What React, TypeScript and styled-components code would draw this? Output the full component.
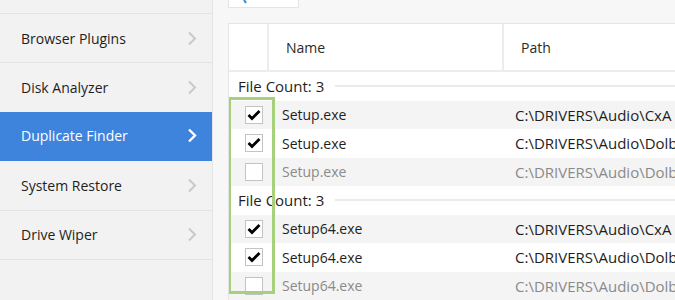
import React from "react";
import styled, { createGlobalStyle } from "styled-components";

const COLORS = {
  side: "#f2f2f2",
  main: "#f7f7f7",
  line: "#e4e4e4",
  blue: "#3f84dc",
  text: "#1e1e1e",
  muted: "#8a8a8a",
  stripe: "#f4f4f4",
  green: "#a7d07c",
};

const GlobalStyle = createGlobalStyle`
  html, body {
    margin: 0;
    padding: 0;
    overflow: hidden;
    background: ${COLORS.main};
  }
  body {
    font-family: "Open Sans", "Noto Sans", sans-serif;
    color: ${COLORS.text};
  }
  * { box-sizing: border-box; }
`;

const Root = styled.div`
  display: flex;
  width: 675px;
  height: 300px;
  overflow: hidden;
`;

const Sidebar = styled.nav`
  width: 213px;
  flex-shrink: 0;
  background: ${COLORS.side};
  border-right: 1px solid ${COLORS.line};
`;

const SideStub = styled.div`
  height: 14px;
  border-bottom: 1px solid ${COLORS.line};
`;

const NavItem = styled.div<{ $active?: boolean }>`
  display: flex;
  align-items: center;
  justify-content: space-between;
  height: 49.4px;
  padding: 0 15px 0 21px;
  font-size: 14px;
  border-bottom: 1px solid ${(p) => (p.$active ? COLORS.blue : COLORS.line)};
  background: ${(p) => (p.$active ? COLORS.blue : "transparent")};
  color: ${(p) => (p.$active ? "#ffffff" : COLORS.text)};
  margin-top: ${(p) => (p.$active ? "-1px" : "0")};
`;

const Chevron = ({ active }: { active?: boolean }) => (
  <svg width="10" height="15" viewBox="0 0 10 15">
    <path
      d="M2 1.5 L8 7.5 L2 13.5"
      fill="none"
      stroke={active ? "#ffffff" : "#c9c9c9"}
      strokeWidth={active ? 2.4 : 2}
    />
  </svg>
);

const Main = styled.main`
  flex: 1;
  min-width: 0;
  display: flex;
  flex-direction: column;
  padding-left: 15px;
  background: ${COLORS.main};
`;

const Toolbar = styled.div`
  height: 23px;
  flex-shrink: 0;
  display: flex;
  align-items: flex-start;
`;

const SearchBox = styled.div`
  position: relative;
  width: 71px;
  height: 8px;
  background: #ffffff;
  border: 1px solid ${COLORS.line};
  border-top: none;
`;

const SearchIcon = styled.svg`
  position: absolute;
  left: 14px;
  top: 0;
`;

const Table = styled.div`
  position: relative;
  flex: 1;
  background: #ffffff;
  border-top: 1px solid ${COLORS.line};
  border-left: 1px solid ${COLORS.line};
  overflow: hidden;
`;

const Grid = styled.div`
  display: grid;
  grid-template-columns: 38px 235px 1fr;
  white-space: nowrap;
`;

const HeaderRow = styled(Grid)`
  height: 48px;
  border-bottom: 2px solid #ececec;
`;

const HeaderCell = styled.div<{ $divider?: boolean }>`
  display: flex;
  align-items: center;
  padding-left: 17px;
  font-size: 14px;
  color: #2a2a2a;
  border-left: ${(p) => (p.$divider ? `2px solid #ececec` : "none")};
`;

const GroupRow = styled.div`
  display: flex;
  align-items: center;
  height: 28.5px;
  padding-left: 9px;
  font-size: 15px;
  color: ${COLORS.text};
`;

const GroupLine = styled.div`
  flex: 1;
  height: 2px;
  margin-left: 11px;
  background: #ebebeb;
`;

const DataRow = styled(Grid)<{ $stripe?: boolean; $muted?: boolean }>`
  height: 28.5px;
  align-items: center;
  font-size: 14px;
  background: ${(p) => (p.$stripe ? COLORS.stripe : "#ffffff")};
  color: ${(p) => (p.$muted ? COLORS.muted : COLORS.text)};
`;

const CheckCell = styled.div`
  display: flex;
  align-items: center;
  padding-left: 16px;
`;

const Box = styled.div`
  width: 18px;
  height: 18px;
  border: 1px solid #c3c3c3;
  background: #ffffff;
  display: flex;
  align-items: center;
  justify-content: center;
`;

const NameCell = styled.div`
  padding-left: 15px;
`;

const PathCell = styled.div`
  padding-left: 13px;
  font-size: 15px;
  overflow: hidden;
`;

const Highlight = styled.div`
  position: absolute;
  left: -1px;
  top: 73px;
  width: 47px;
  height: 197px;
  border: 3px solid ${COLORS.green};
  pointer-events: none;
`;

const CheckBox = ({ checked }: { checked: boolean }) => (
  <Box>
    {checked && (
      <svg width="14" height="12" viewBox="0 0 14 12">
        <path d="M1.5 6 L5 9.5 L12.5 2" fill="none" stroke="#000" strokeWidth="2.8" />
      </svg>
    )}
  </Box>
);

const navItems = [
  "Browser Plugins",
  "Disk Analyzer",
  "Duplicate Finder",
  "System Restore",
  "Drive Wiper",
];

const groups = [
  {
    name: "Setup.exe",
    paths: ["C:\\DRIVERS\\Audio\\CxA", "C:\\DRIVERS\\Audio\\Dolb", "C:\\DRIVERS\\Audio\\Dolb"],
  },
  {
    name: "Setup64.exe",
    paths: ["C:\\DRIVERS\\Audio\\CxA", "C:\\DRIVERS\\Audio\\Dolb", "C:\\DRIVERS\\Audio\\Dolb"],
  },
];

export default function App() {
  return (
    <Root>
      <GlobalStyle />
      <Sidebar>
        <SideStub />
        {navItems.map((label) => {
          const active = label === "Duplicate Finder";
          return (
            <NavItem key={label} $active={active}>
              {label}
              <Chevron active={active} />
            </NavItem>
          );
        })}
      </Sidebar>
      <Main>
        <Toolbar>
          <SearchBox>
            <SearchIcon width="6" height="4" viewBox="0 0 6 4">
              <path d="M1 0 L3 3" stroke={COLORS.blue} strokeWidth="2" />
            </SearchIcon>
          </SearchBox>
        </Toolbar>
        <Table>
          <HeaderRow>
            <HeaderCell />
            <HeaderCell $divider>Name</HeaderCell>
            <HeaderCell $divider>Path</HeaderCell>
          </HeaderRow>
          {groups.map((g, gi) => (
            <React.Fragment key={gi}>
              <GroupRow>
                File Count: 3
                <GroupLine />
              </GroupRow>
              {g.paths.map((path, i) => {
                const checked = i < 2;
                return (
                  <DataRow key={i} $stripe={i !== 1} $muted={!checked}>
                    <CheckCell>
                      <CheckBox checked={checked} />
                    </CheckCell>
                    <NameCell>{g.name}</NameCell>
                    <PathCell>{path}</PathCell>
                  </DataRow>
                );
              })}
            </React.Fragment>
          ))}
          <Highlight />
        </Table>
      </Main>
    </Root>
  );
}
